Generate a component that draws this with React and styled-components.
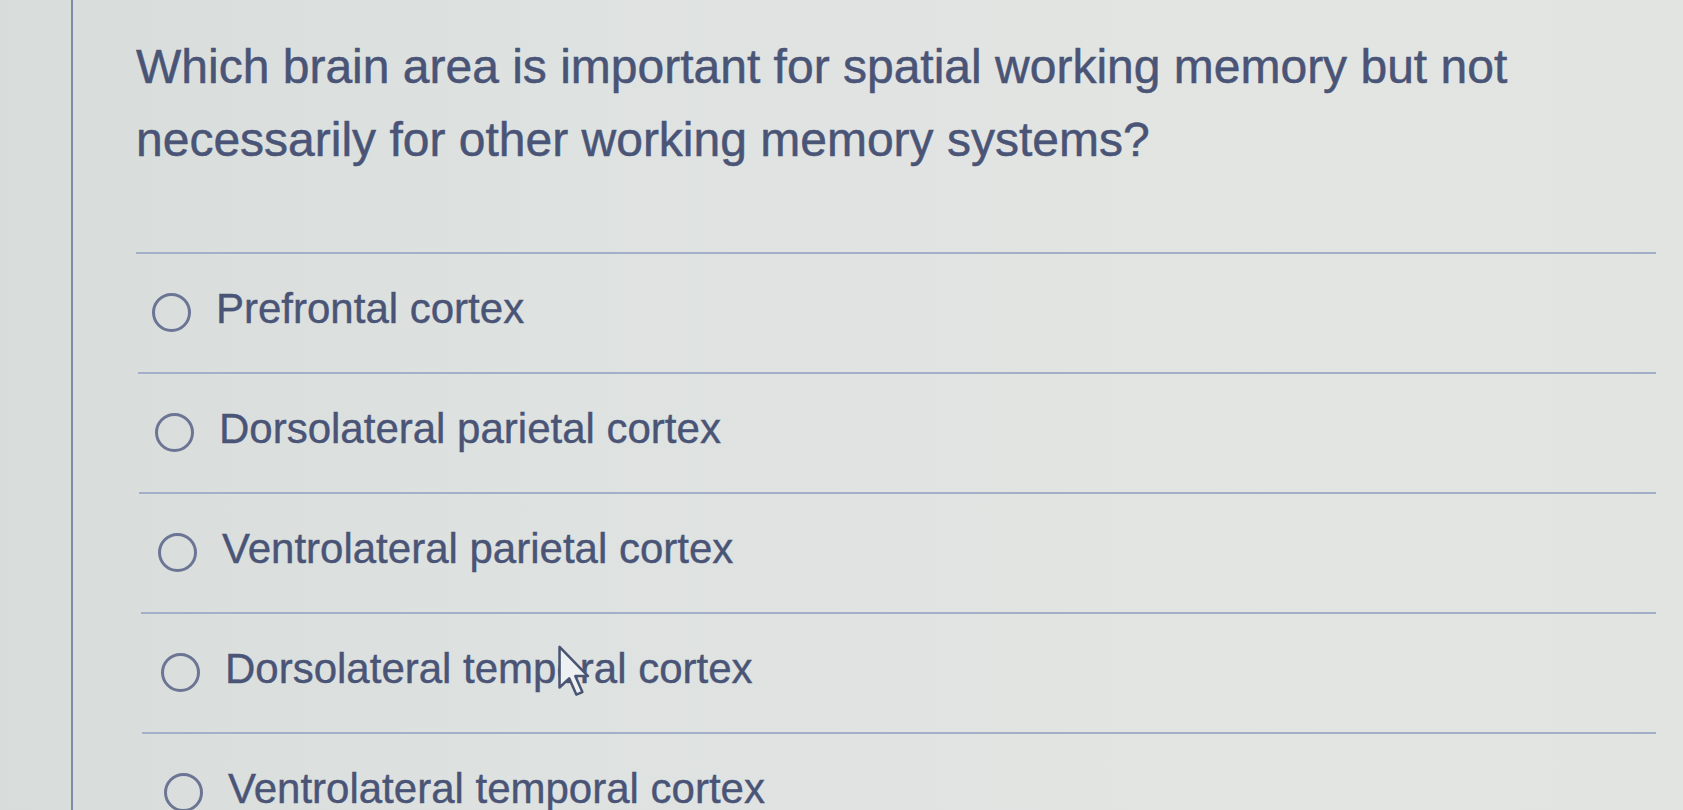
import React from "react";
import styled, { createGlobalStyle } from "styled-components";

const options = [
  "Prefrontal cortex",
  "Dorsolateral parietal cortex",
  "Ventrolateral parietal cortex",
  "Dorsolateral temporal cortex",
  "Ventrolateral temporal cortex",
];

const GlobalStyle = createGlobalStyle`
  html, body {
    margin: 0;
    padding: 0;
    overflow: hidden;
  }
  body {
    background: linear-gradient(90deg, #d8dddc 0%, #dee2e1 35%, #e3e5e2 75%, #e2e4e1 100%);
    font-family: "Liberation Sans", Arial, sans-serif;
  }
`;

export default function App() {
  return (
    <>
      <GlobalStyle />
      <Page>
        <Gutter />
        <Content>
          <Question>
            Which brain area is important for spatial working memory but not
            <br />
            necessarily for other working memory systems?
          </Question>
          <OptionList>
            {options.map((label, i) => (
              <OptionRow key={label} $shift={i * 1.5}>
                <Radio />
                <Label>{label}</Label>
                {i === 3 && (
                  <Cursor viewBox="0 0 13 21" aria-hidden="true">
                    <path
                      d="M1 1 L1 17 L4.8 13.4 L7.6 19.8 L10 18.8 L7.2 12.5 L12.2 12.5 Z"
                      fill="#eef1f2"
                      stroke="#4a5574"
                      strokeWidth="1"
                      strokeLinejoin="round"
                    />
                  </Cursor>
                )}
              </OptionRow>
            ))}
          </OptionList>
        </Content>
      </Page>
    </>
  );
}

const Page = styled.div`
  display: flex;
  min-height: 100vh;
`;

const Gutter = styled.div`
  width: 71px;
  flex-shrink: 0;
  border-right: 2px solid #7e8aa8;
`;

const Content = styled.main`
  flex: 1;
  padding: 30px 27px 0 63px;
`;

const Question = styled.h1`
  margin: 0 0 76px;
  font-size: 48px;
  line-height: 73px;
  font-weight: 400;
  color: #4a5476;
  -webkit-text-stroke: 0.5px #4a5476;
  white-space: nowrap;
`;

const OptionList = styled.ul`
  list-style: none;
  margin: 0;
  padding: 0;
`;

const OptionRow = styled.li`
  position: relative;
  display: flex;
  align-items: flex-start;
  box-sizing: border-box;
  height: 120px;
  padding: 34px 0 0 ${(p) => 16 + p.$shift}px;
  margin-left: ${(p) => p.$shift}px;
  border-top: 2px solid #a3afc6;
`;

const Radio = styled.span`
  flex-shrink: 0;
  width: 33px;
  height: 33px;
  margin-top: 5px;
  border: 3px solid #6c7694;
  border-radius: 50%;
`;

const Label = styled.span`
  margin-left: 25px;
  font-size: 42px;
  line-height: 42px;
  color: #4a5476;
  -webkit-text-stroke: 0.4px #4a5476;
  white-space: nowrap;
`;

const Cursor = styled.svg`
  position: absolute;
  left: 416px;
  top: 29px;
  width: 33px;
  height: 56px;
`;
